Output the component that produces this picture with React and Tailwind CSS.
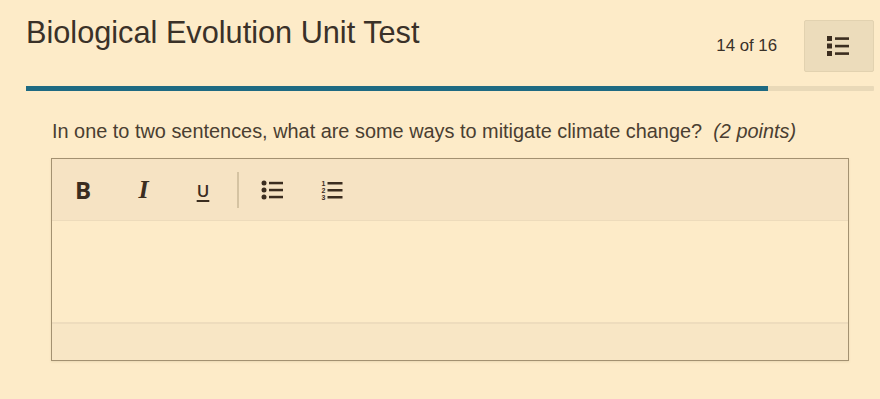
import React from 'react';

const BulletIcon = () => (
  <svg width="24" height="22" viewBox="0 0 24 22" className="text-[#3b2d1f]">
    <circle cx="3" cy="4" r="2.5" fill="currentColor" />
    <circle cx="3" cy="11" r="2.5" fill="currentColor" />
    <circle cx="3" cy="18" r="2.5" fill="currentColor" />
    <rect x="8" y="2.8" width="14" height="2.5" fill="currentColor" />
    <rect x="8" y="9.8" width="14" height="2.5" fill="currentColor" />
    <rect x="8" y="16.8" width="14" height="2.5" fill="currentColor" />
  </svg>
);

const NumberIcon = () => (
  <svg width="24" height="24" viewBox="0 0 24 24" className="text-[#3b2d1f]">
    <text x="0.5" y="7.5" fontSize="7" fontWeight="bold" fontFamily="Liberation Sans, sans-serif" fill="currentColor">1</text>
    <text x="0.5" y="14.5" fontSize="7" fontWeight="bold" fontFamily="Liberation Sans, sans-serif" fill="currentColor">2</text>
    <text x="0.5" y="21.5" fontSize="7" fontWeight="bold" fontFamily="Liberation Sans, sans-serif" fill="currentColor">3</text>
    <rect x="6.5" y="4" width="15" height="2.5" fill="currentColor" />
    <rect x="6.5" y="11" width="15" height="2.5" fill="currentColor" />
    <rect x="6.5" y="18" width="15" height="2.5" fill="currentColor" />
  </svg>
);

const MenuIcon = () => (
  <svg width="24" height="22" viewBox="0 0 24 22" className="text-[#3b2d1f]">
    <rect x="0" y="1" width="5" height="5" fill="currentColor" />
    <rect x="0" y="8.5" width="5" height="5" fill="currentColor" />
    <rect x="0" y="16" width="5" height="5" fill="currentColor" />
    <rect x="8" y="2.3" width="14" height="2.6" fill="currentColor" />
    <rect x="8" y="9.8" width="14" height="2.6" fill="currentColor" />
    <rect x="8" y="17.3" width="14" height="2.6" fill="currentColor" />
  </svg>
);

export default function App() {
  const current = 14;
  const total = 16;

  return (
    <div className="w-[880px] h-[399px] bg-[#fdebc8] pl-[26px] pr-[6px] font-['Liberation_Sans',Arial,sans-serif] text-[#3a3128] overflow-hidden">
      {/* Header */}
      <div className="flex justify-between items-start">
        <h1 className="mt-[14px] text-[30.7px] leading-[38px] font-normal text-[#3a3128]">
          Biological Evolution Unit Test
        </h1>
        <div className="flex items-start">
          <span className="mt-[35px] text-[16.8px] leading-[21px] text-[#3a3128]">
            {current} of {total}
          </span>
          <button className="ml-[27px] mt-[20px] w-[70px] h-[52px] bg-[#ecdcbb] border border-[#e2d2b0] rounded-[2px] flex items-center justify-center">
            <MenuIcon />
          </button>
        </div>
      </div>

      {/* Progress */}
      <div className="mt-[14px] h-[5px] bg-[#e9d9b8] rounded-[1px]">
        <div className="h-full bg-[#1e6a82]" style={{ width: `${(current / total) * 100}%` }} />
      </div>

      {/* Question */}
      <p className="mt-[27px] pl-[26px] text-[19.9px] leading-[26px] text-[#4a3e31]">
        In one to two sentences, what are some ways to mitigate climate change?{'\u00a0\u00a0'}
        <span className="italic">(2 points)</span>
      </p>

      {/* Editor */}
      <div className="mt-[14px] ml-[25px] w-[798px] border border-[#a39171] shadow-[0_1px_2px_rgba(200,180,140,0.35)]">
        <div className="h-[62px] bg-[#f6e3c3] border-b border-[#eddbbb] flex items-center pl-[23px]">
          <span className="w-[16px] text-center text-[24px] leading-[28px] font-bold font-['Open_Sans',sans-serif] text-[#3b2d1f]">B</span>
          <span className="ml-[44px] w-[17px] text-center text-[26px] leading-[28px] italic font-bold font-['Liberation_Serif',serif] text-[#3b2d1f]">I</span>
          <span className="ml-[43px] w-[16px] mt-[3px] text-center text-[17px] leading-[20px] font-semibold font-['Open_Sans',sans-serif] underline decoration-2 underline-offset-[3px] text-[#3b2d1f]">U</span>
          <span className="ml-[26px] w-[2px] h-[36px] bg-[#d5c3a2]" />
          <span className="ml-[22px]"><BulletIcon /></span>
          <span className="ml-[36px]"><NumberIcon /></span>
        </div>
        <div className="h-[101px] bg-[#fdebc8]" />
        <div className="h-[38px] bg-[#f8e6c5] border-t-2 border-[#eedcbd]" />
      </div>
    </div>
  );
}
